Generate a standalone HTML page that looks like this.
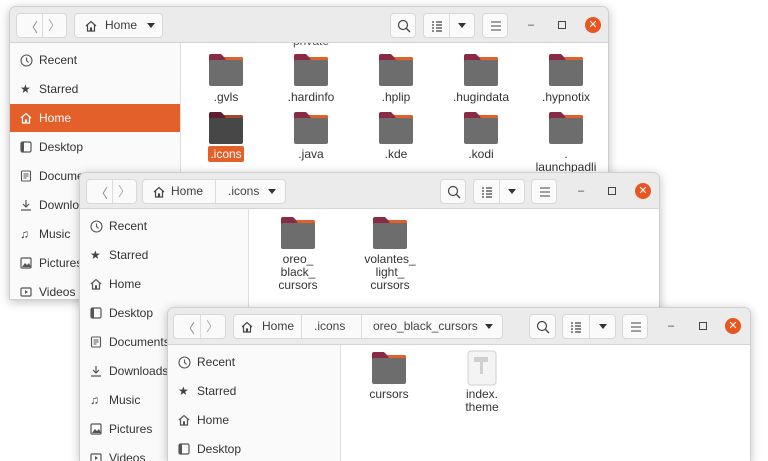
<!DOCTYPE html>
<html style="width:768px;height:461px;overflow:hidden"><head><meta charset="utf-8"><style>
*{box-sizing:border-box;margin:0;padding:0}
body{width:768px;height:461px;background:#fff;position:relative;overflow:hidden;font-family:"Liberation Sans","DejaVu Sans",sans-serif;color:#3c3c3c}
.win{position:absolute;background:#fff;border:1px solid #cfcfcf;border-radius:7px 7px 0 0;overflow:hidden;box-shadow:0 2px 10px rgba(0,0,0,.25)}
.open{border-bottom:none}
.hb{position:absolute;left:0;top:0;right:0;height:36px;background:#ebebeb;border-bottom:1px solid #d4d4d4;z-index:2}
.btn{position:absolute;top:6px;height:25px;background:#fafafa;border:1px solid #d8d8d8;border-radius:4px}
.seg{position:absolute;top:0;bottom:0;border-left:1px solid #dcdcdc;font-size:12px;line-height:23px;color:#444}
.side{position:absolute;left:0;top:36px;bottom:0;background:#fafafa;border-right:1px solid #dedede}
.it{position:absolute;left:0;right:0;height:28px;font-size:12px;line-height:28px;padding-left:29px;color:#333;white-space:nowrap}
.it svg{position:absolute;left:10px;top:8px}
.it.sel{background:#e3602a;color:#fff}
.lbl{position:absolute;width:90px;text-align:center;font-size:12px;line-height:13px;color:#333}
.fo{position:absolute;width:36px;height:34px}
.wc{position:absolute;top:10px;width:16px;height:16px;text-align:center;font-size:11px;line-height:16px;color:#444}
.cl{background:#e95420;border-radius:50%;color:#fff;font-weight:bold}
</style></head><body>
<svg width="0" height="0" style="position:absolute">
<defs>
<symbol id="fold" viewBox="0 0 36 34">
<path d="M3 1h10l3 3h17a2 2 0 0 1 2 2v4H1V3a2 2 0 0 1 2-2z" fill="#8a2b45"/>
<path d="M16 4h17a2 2 0 0 1 2 2v3H19z" fill="#e0622a"/>
<rect x="1" y="7" width="34" height="26" rx="2" fill="#6d6d6d"/>
</symbol>
<symbol id="foldd" viewBox="0 0 36 34">
<path d="M3 1h10l3 3h17a2 2 0 0 1 2 2v4H1V3a2 2 0 0 1 2-2z" fill="#5e1f30"/>
<path d="M16 4h17a2 2 0 0 1 2 2v3H19z" fill="#9e4a2a"/>
<rect x="1" y="7" width="34" height="26" rx="2" fill="#474747"/>
</symbol>
<symbol id="home" viewBox="0 0 12 12"><path d="M1 6L6 1.5 11 6M2.5 5v6h3V8h1v3h3V5" fill="none" stroke="currentColor" stroke-width="1.2"/></symbol>
</defs></svg>

<!-- WINDOW 1 -->
<div class="win" style="left:9px;top:6px;width:600px;height:294px">
 <div class="hb">
  <div class="btn" style="left:6px;width:51px"><span style="position:absolute;left:8px;top:3px;font-size:13px;color:#888">〈</span><div class="seg" style="left:25px;width:25px"><span style="position:absolute;left:5px;top:0;font-size:13px;color:#aaa">〉</span></div></div>
  <div class="btn" style="left:64px;width:89px"><svg width="12" height="12" style="position:absolute;left:10px;top:6px;color:#444"><use href="#home"/></svg><span style="position:absolute;left:30px;font-size:12px;line-height:23px">Home</span><span style="position:absolute;left:72px;top:9px;border:4px solid transparent;border-top:5px solid #333"></span></div>
  <div class="btn" style="left:380px;width:26px"><svg width="14" height="14" style="position:absolute;left:6px;top:5px"><circle cx="6" cy="6" r="4.5" fill="none" stroke="#444" stroke-width="1.2"/><path d="M9.5 9.5L13 13" stroke="#444" stroke-width="1.3"/></svg></div>
  <div class="btn" style="left:413px;width:52px"><svg width="12" height="12" style="position:absolute;left:7px;top:6px"><path d="M1 2h2M5 2h6M1 5h2M5 5h6M1 8h2M5 8h6M1 11h2M5 11h6" stroke="#444" stroke-width="1.2"/></svg><div class="seg" style="left:25px;width:26px"><span style="position:absolute;left:8px;top:9px;border:4px solid transparent;border-top:5px solid #333"></span></div></div>
  <div class="btn" style="left:472px;width:26px"><svg width="12" height="10" style="position:absolute;left:7px;top:7px"><path d="M1 1h10M1 5h10M1 9h10" stroke="#444" stroke-width="1.1"/></svg></div>
  <div class="wc" style="left:513px">–</div>
  <div class="wc" style="left:544px"><span style="display:inline-block;width:8px;height:8px;border:1.3px solid #444;margin-top:4px"></span></div>
  <div class="wc cl" style="left:575px">✕</div>
 </div>
 <div class="side" style="width:171px">
  <div class="it" style="top:3px"><svg width="13" height="13"><circle cx="6.5" cy="6.5" r="5.5" fill="none" stroke="#555" stroke-width="1.1"/><path d="M6.5 3.5v3l2 2" fill="none" stroke="#555" stroke-width="1.1"/></svg>Recent</div>
  <div class="it" style="top:32px"><span style="position:absolute;left:10px;font-size:12px;color:#444">★</span>Starred</div>
  <div class="it sel" style="top:61px"><svg width="12" height="12" style="color:#fff"><use href="#home"/></svg>Home</div>
  <div class="it" style="top:90px"><svg width="12" height="12"><rect x="1" y="1" width="10" height="10" rx="1.5" fill="none" stroke="#555" stroke-width="1.2"/><rect x="1" y="1" width="3" height="10" fill="#555"/></svg>Desktop</div>
  <div class="it" style="top:119px"><svg width="12" height="12"><rect x="1.5" y="1" width="9" height="10" rx="1" fill="none" stroke="#555" stroke-width="1.1"/><path d="M3.5 4h5M3.5 6h5M3.5 8h3" stroke="#555"/></svg>Documents</div>
  <div class="it" style="top:148px"><svg width="12" height="12"><path d="M6 1v7M3 5l3 3 3-3M1 11h10" fill="none" stroke="#555" stroke-width="1.2"/></svg>Downloads</div>
  <div class="it" style="top:177px"><span style="position:absolute;left:10px;font-size:12px;color:#444">♫</span>Music</div>
  <div class="it" style="top:206px"><svg width="12" height="12"><rect x="1" y="1" width="10" height="10" rx="1" fill="none" stroke="#555" stroke-width="1.2"/><path d="M2 10l3-4 2 2 2-2 2 4z" fill="#555"/></svg>Pictures</div>
  <div class="it" style="top:235px"><svg width="12" height="12"><rect x="1" y="2" width="10" height="8" rx="1" fill="none" stroke="#555" stroke-width="1.2"/><path d="M5 4v4l3-2z" fill="#555"/></svg>Videos</div>
 </div>
 <div class="lbl" style="left:256px;top:28px;color:#555">private</div>
 <svg class="fo" style="left:198px;top:46px"><use href="#fold"/></svg>
 <svg class="fo" style="left:283px;top:46px"><use href="#fold"/></svg>
 <svg class="fo" style="left:368px;top:46px"><use href="#fold"/></svg>
 <svg class="fo" style="left:453px;top:46px"><use href="#fold"/></svg>
 <svg class="fo" style="left:538px;top:46px"><use href="#fold"/></svg>
 <div class="lbl" style="left:171px;top:84px">.gvls</div>
 <div class="lbl" style="left:256px;top:84px">.hardinfo</div>
 <div class="lbl" style="left:341px;top:84px">.hplip</div>
 <div class="lbl" style="left:426px;top:84px">.hugindata</div>
 <div class="lbl" style="left:511px;top:84px">.hypnotix</div>
 <svg class="fo" style="left:198px;top:104px"><use href="#foldd"/></svg>
 <svg class="fo" style="left:283px;top:104px"><use href="#fold"/></svg>
 <svg class="fo" style="left:368px;top:104px"><use href="#fold"/></svg>
 <svg class="fo" style="left:453px;top:104px"><use href="#fold"/></svg>
 <svg class="fo" style="left:538px;top:104px"><use href="#fold"/></svg>
 <div class="lbl" style="left:171px;top:141px"><span style="background:#e3602a;color:#fff;padding:1px 2px;border-radius:2px">.icons</span></div>
 <div class="lbl" style="left:256px;top:141px">.java</div>
 <div class="lbl" style="left:341px;top:141px">.kde</div>
 <div class="lbl" style="left:426px;top:141px">.kodi</div>
 <div class="lbl" style="left:511px;top:141px">.<br>launchpadli</div>
</div>

<!-- WINDOW 2 -->
<div class="win open" style="left:79px;top:172px;width:581px;height:289px">
 <div class="hb">
  <div class="btn" style="left:6px;width:51px"><span style="position:absolute;left:8px;top:3px;font-size:13px;color:#888">〈</span><div class="seg" style="left:25px;width:25px"><span style="position:absolute;left:5px;top:0;font-size:13px;color:#aaa">〉</span></div></div>
  <div class="btn" style="left:62px;width:144px"><svg width="12" height="12" style="position:absolute;left:10px;top:6px;color:#444"><use href="#home"/></svg><span style="position:absolute;left:28px;font-size:12px;line-height:23px">Home</span><div class="seg" style="left:72px;width:71px"><span style="position:absolute;left:12px">.icons</span><span style="position:absolute;left:52px;top:9px;border:4px solid transparent;border-top:5px solid #333"></span></div></div>
  <div class="btn" style="left:360px;width:26px"><svg width="14" height="14" style="position:absolute;left:6px;top:5px"><circle cx="6" cy="6" r="4.5" fill="none" stroke="#444" stroke-width="1.2"/><path d="M9.5 9.5L13 13" stroke="#444" stroke-width="1.3"/></svg></div>
  <div class="btn" style="left:393px;width:52px"><svg width="12" height="12" style="position:absolute;left:7px;top:6px"><path d="M1 2h2M5 2h6M1 5h2M5 5h6M1 8h2M5 8h6M1 11h2M5 11h6" stroke="#444" stroke-width="1.2"/></svg><div class="seg" style="left:25px;width:26px"><span style="position:absolute;left:8px;top:9px;border:4px solid transparent;border-top:5px solid #333"></span></div></div>
  <div class="btn" style="left:451px;width:26px"><svg width="12" height="10" style="position:absolute;left:7px;top:7px"><path d="M1 1h10M1 5h10M1 9h10" stroke="#444" stroke-width="1.1"/></svg></div>
  <div class="wc" style="left:493px">–</div>
  <div class="wc" style="left:524px"><span style="display:inline-block;width:8px;height:8px;border:1.3px solid #444;margin-top:4px"></span></div>
  <div class="wc cl" style="left:555px">✕</div>
 </div>
 <div class="side" style="width:169px">
  <div class="it" style="top:3px"><svg width="13" height="13"><circle cx="6.5" cy="6.5" r="5.5" fill="none" stroke="#555" stroke-width="1.1"/><path d="M6.5 3.5v3l2 2" fill="none" stroke="#555" stroke-width="1.1"/></svg>Recent</div>
  <div class="it" style="top:32px"><span style="position:absolute;left:10px;font-size:12px;color:#444">★</span>Starred</div>
  <div class="it" style="top:61px"><svg width="12" height="12" style="color:#555"><use href="#home"/></svg>Home</div>
  <div class="it" style="top:90px"><svg width="12" height="12"><rect x="1" y="1" width="10" height="10" rx="1.5" fill="none" stroke="#555" stroke-width="1.2"/><rect x="1" y="1" width="3" height="10" fill="#555"/></svg>Desktop</div>
  <div class="it" style="top:119px"><svg width="12" height="12"><rect x="1.5" y="1" width="9" height="10" rx="1" fill="none" stroke="#555" stroke-width="1.1"/><path d="M3.5 4h5M3.5 6h5M3.5 8h3" stroke="#555"/></svg>Documents</div>
  <div class="it" style="top:148px"><svg width="12" height="12"><path d="M6 1v7M3 5l3 3 3-3M1 11h10" fill="none" stroke="#555" stroke-width="1.2"/></svg>Downloads</div>
  <div class="it" style="top:177px"><span style="position:absolute;left:10px;font-size:12px;color:#444">♫</span>Music</div>
  <div class="it" style="top:206px"><svg width="12" height="12"><rect x="1" y="1" width="10" height="10" rx="1" fill="none" stroke="#555" stroke-width="1.2"/><path d="M2 10l3-4 2 2 2-2 2 4z" fill="#555"/></svg>Pictures</div>
  <div class="it" style="top:235px"><svg width="12" height="12"><rect x="1" y="2" width="10" height="8" rx="1" fill="none" stroke="#555" stroke-width="1.2"/><path d="M5 4v4l3-2z" fill="#555"/></svg>Videos</div>
 </div>
 <svg class="fo" style="left:200px;top:43px"><use href="#fold"/></svg>
 <svg class="fo" style="left:292px;top:43px"><use href="#fold"/></svg>
 <div class="lbl" style="left:173px;top:80px">oreo_<br>black_<br>cursors</div>
 <div class="lbl" style="left:265px;top:80px">volantes_<br>light_<br>cursors</div>
</div>

<!-- WINDOW 3 -->
<div class="win open" style="left:167px;top:307px;width:584px;height:154px">
 <div class="hb" style="height:37px">
  <div class="btn" style="left:5px;width:53px"><span style="position:absolute;left:8px;top:3px;font-size:13px;color:#888">〈</span><div class="seg" style="left:26px;width:26px"><span style="position:absolute;left:5px;top:0;font-size:13px;color:#aaa">〉</span></div></div>
  <div class="btn" style="left:65px;width:270px"><svg width="12" height="12" style="position:absolute;left:7px;top:6px;color:#444"><use href="#home"/></svg><span style="position:absolute;left:28px;font-size:12px;line-height:23px">Home</span><div class="seg" style="left:67px;width:60px"><span style="position:absolute;left:12px">.icons</span></div><div class="seg" style="left:127px;width:142px"><span style="position:absolute;left:11px">oreo_black_cursors</span><span style="position:absolute;left:123px;top:9px;border:4px solid transparent;border-top:5px solid #333"></span></div></div>
  <div class="btn" style="left:361px;width:27px"><svg width="14" height="14" style="position:absolute;left:6px;top:5px"><circle cx="6" cy="6" r="4.5" fill="none" stroke="#444" stroke-width="1.2"/><path d="M9.5 9.5L13 13" stroke="#444" stroke-width="1.3"/></svg></div>
  <div class="btn" style="left:394px;width:54px"><svg width="12" height="12" style="position:absolute;left:7px;top:6px"><path d="M1 2h2M5 2h6M1 5h2M5 5h6M1 8h2M5 8h6M1 11h2M5 11h6" stroke="#444" stroke-width="1.2"/></svg><div class="seg" style="left:26px;width:27px"><span style="position:absolute;left:9px;top:9px;border:4px solid transparent;border-top:5px solid #333"></span></div></div>
  <div class="btn" style="left:454px;width:26px"><svg width="12" height="10" style="position:absolute;left:7px;top:7px"><path d="M1 1h10M1 5h10M1 9h10" stroke="#444" stroke-width="1.1"/></svg></div>
  <div class="wc" style="left:495px">–</div>
  <div class="wc" style="left:527px"><span style="display:inline-block;width:8px;height:8px;border:1.3px solid #444;margin-top:4px"></span></div>
  <div class="wc cl" style="left:557px">✕</div>
 </div>
 <div class="side" style="width:173px;top:37px">
  <div class="it" style="top:3px"><svg width="13" height="13"><circle cx="6.5" cy="6.5" r="5.5" fill="none" stroke="#555" stroke-width="1.1"/><path d="M6.5 3.5v3l2 2" fill="none" stroke="#555" stroke-width="1.1"/></svg>Recent</div>
  <div class="it" style="top:32px"><span style="position:absolute;left:10px;font-size:12px;color:#444">★</span>Starred</div>
  <div class="it" style="top:61px"><svg width="12" height="12" style="color:#555"><use href="#home"/></svg>Home</div>
  <div class="it" style="top:90px"><svg width="12" height="12"><rect x="1" y="1" width="10" height="10" rx="1.5" fill="none" stroke="#555" stroke-width="1.2"/><rect x="1" y="1" width="3" height="10" fill="#555"/></svg>Desktop</div>
 </div>
 <svg class="fo" style="left:203px;top:43px"><use href="#fold"/></svg>
 <div class="lbl" style="left:176px;top:80px">cursors</div>
 <svg style="position:absolute;left:299px;top:42px" width="30" height="36"><rect x="1" y="1" width="28" height="34" rx="3" fill="#f4f4f4" stroke="#d0d0d0"/><rect x="7" y="7" width="14" height="5" fill="#cfcfcf"/><rect x="13" y="12" width="3" height="12" fill="#cfcfcf"/></svg>
 <div class="lbl" style="left:269px;top:80px">index.<br>theme</div>
</div>
</body></html>
